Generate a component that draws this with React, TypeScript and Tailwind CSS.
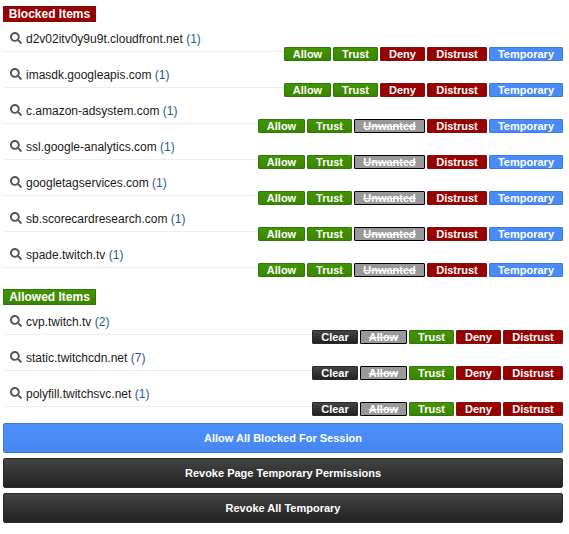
const HeadBase = "w-[93px] h-4 border text-white text-xs font-bold flex items-center justify-center leading-none";

const btnBase = "h-[14px] border rounded-[1px] text-white text-[11px] font-bold leading-none flex items-center justify-center";

const green = "bg-gradient-to-b from-[#449400] to-[#3a8500] border-[#2f7a10]";
const red = "bg-[#990000] border-[#7f1010]";

const btnStyles: Record<string, string> = {
	Allow: `w-[47px] ${green}`,
	Trust: `w-[45px] ${green}`,
	Deny: `w-[45px] ${red}`,
	Distrust: `w-[60px] ${red}`,
	Temporary: "w-[74px] bg-[#4a8cf7] border-[#3b7ae6]",
	Clear: "w-[46px] bg-gradient-to-b from-[#444444] to-[#222222] border-[#2a2a2a]",
};

const offWidths: Record<string, string> = {
	Allow: "w-[47px]",
	Unwanted: "w-[71px]",
};

const Search = () => (
	<svg viewBox="0 0 512 512" className="w-3 h-3 mr-1 shrink-0 fill-[#555555]">
		<path d="M505 442.700 405.300 343c-4.500-4.500-10.600-7-17-7H372c27.600-35.300 44-79.700 44-128C416 93.100 322.900 0 208 0S0 93.100 0 208s93.100 208 208 208c48.300 0 92.700-16.400 128-44v16.300c0 6.400 2.500 12.500 7 17l99.700 99.700c9.400 9.400 24.600 9.400 33.900 0l28.300-28.300c9.400-9.400 9.400-24.600.1-34zM208 336c-70.700 0-128-57.200-128-128 0-70.700 57.200-128 128-128 70.700 0 128 57.200 128 128 0 70.700-57.200 128-128 128z" />
	</svg>
);

const Button = ({ label, off }: { label: string; off?: boolean }) => (
	<div className={off ? `${btnBase} ${offWidths[label]} bg-[#999999] border-black line-through` : `${btnBase} ${btnStyles[label]}`}>
		{label}
	</div>
);

const Row = ({ host, count, buttons, off }: { host: string; count: number; buttons: string[]; off: string }) => (
	<div>
		<div className="h-[27px] pl-[7px] border-b border-[#eeeeee] flex items-start pt-[7px]">
			<Search />
			<span className="text-xs leading-none text-[#1a1a1a] relative top-[0.5px]">
				{host} <span className="text-[#2a5a8c]">({count})</span>
			</span>
		</div>
		<div className="flex justify-end gap-[2px] -mt-[5px]">
			{buttons.map((b) => (
				<Button key={b} label={b} off={b === off} />
			))}
		</div>
	</div>
);

const blocked = [
	["d2v02itv0y9u9t.cloudfront.net", 1, "Deny"],
	["imasdk.googleapis.com", 1, "Deny"],
	["c.amazon-adsystem.com", 1, "Unwanted"],
	["ssl.google-analytics.com", 1, "Unwanted"],
	["googletagservices.com", 1, "Unwanted"],
	["sb.scorecardresearch.com", 1, "Unwanted"],
	["spade.twitch.tv", 1, "Unwanted"],
] as const;

const allowed = [
	["cvp.twitch.tv", 2],
	["static.twitchcdn.net", 7],
	["polyfill.twitchsvc.net", 1],
] as const;

const App = () => {
	return (
		<div className="w-[569px] h-[534px] bg-white pt-[6px] pl-[3px] pr-[6px] font-['Liberation_Sans',Arial,sans-serif]">
			<div className={`${HeadBase} ${red}`}>Blocked Items</div>
			<div className="flex flex-col mt-[3px]">
				{blocked.map(([host, count, mid]) => (
					<Row
						key={host}
						host={host}
						count={count}
						off="Unwanted"
						buttons={["Allow", "Trust", mid === "Deny" ? "Deny" : "Unwanted", "Distrust", "Temporary"]}
					/>
				))}
			</div>
			<div className={`${HeadBase} mt-3 ${green}`}>Allowed Items</div>
			<div className="flex flex-col mt-[3px]">
				{allowed.map(([host, count]) => (
					<Row key={host} host={host} count={count} off="Allow" buttons={["Clear", "Allow", "Trust", "Deny", "Distrust"]} />
				))}
			</div>
			<div className="flex flex-col gap-[5px] mt-[7px]">
				<div className="h-[30px] rounded-[2px] border border-[#3b7ae6] bg-gradient-to-b from-[#4d90fe] to-[#4787ed] text-white text-[11px] font-bold flex items-center justify-center">
					Allow All Blocked For Session
				</div>
				<div className="h-[30px] rounded-[2px] border border-[#2a2a2a] bg-gradient-to-b from-[#444444] to-[#222222] text-white text-[11px] font-bold flex items-center justify-center">
					Revoke Page Temporary Permissions
				</div>
				<div className="h-[30px] rounded-[2px] border border-[#2a2a2a] bg-gradient-to-b from-[#444444] to-[#222222] text-white text-[11px] font-bold flex items-center justify-center">
					Revoke All Temporary
				</div>
			</div>
		</div>
	);
};

export default App;
